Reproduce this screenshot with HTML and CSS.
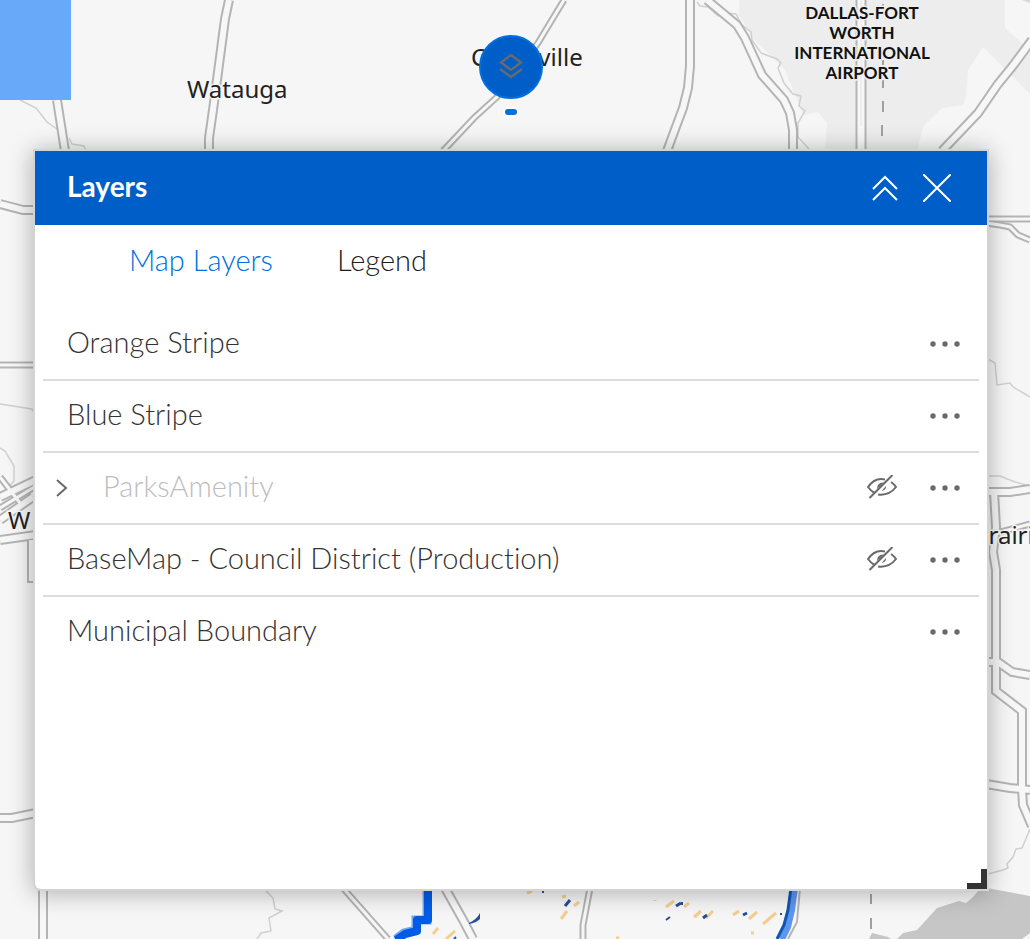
FILE: index.html
```html
<!DOCTYPE html>
<html lang="en">
<head>
    <meta charset="UTF-8">
    <meta name="viewport" content="width=device-width, initial-scale=1.0">
    <title>Layers</title>
    <link rel="stylesheet" href="styles.css">
</head>
<body>

<!-- Basemap -->
<svg class="map" viewBox="0 0 1030 939" preserveAspectRatio="xMidYMid slice" aria-hidden="true">
    <defs>
        <g id="roads">
            <path d="M57 100L65 151"/>
            <path d="M229 0L225 19L213 110L209 138V151"/>
            <path d="M690 0L690 66L688 88L683 108L677 124L667 151"/>
            <path d="M707 0L737 25L745 38L762 75L784 100L790 113L793 130V151"/>
            <path d="M1032 40L1012 67L998 84L978 113L942 151"/>
            <path d="M0 204L23 210H36"/>
            <path d="M0 520L33 497M0 540L36 535M0 497L36 480"/>
            <path d="M32 540V578H36"/>
            <path d="M0 818H12L36 813"/>
            <path d="M986 492H1010L1030 489"/>
            <path d="M994 492L996 527L993 552L996 570V691L1022 711V789L1023 805L1032 826"/>
            <path d="M986 662H998L1012 672L1030 675"/>
            <path d="M986 784L1010 788L1030 790"/>
            <path d="M43 888V939"/>
            <path d="M445 888L463 920L473 939"/>
        </g>
        <g id="small-roads">
            <path d="M564 0L547 28L538 43L497 97L474 118L443 151"/>
            <path d="M0 365H36"/>
            <path d="M0 477L20 503M0 508L36 486"/>
            <path d="M986 219H1030"/>
            <path d="M986 223L1000 225L1010 227L1018 235L1030 240"/>
            <path d="M997 533L1030 524"/>
            <path d="M343 888L388 939"/>
            <path d="M590 888L583 925V939"/>
        </g>
    </defs>

    <rect width="1030" height="939" fill="#f6f6f6"/>
    <path fill="#ededed" d="M739 0H1005V28L1030 50V94L983 47L968 70L966 97L963 105L942 108L923 127L917 151H825L827 123L818 112L803 115L785 70L752 37L739 15z"/>
    <path fill="#d8d8d8" d="M1022 0H1030V3z"/>
    <path fill="#c6c6c6" d="M978 891L987 888L1030 896V933L1022 939H897L903 933L917 930L937 908L959 901L966 903L973 897zM872 933L888 937L891 939H869z"/>

    <g class="thin">
        <path d="M20 100L36 108L47 122L57 129M69 138L72 144L84 146L86 150"/>
        <path d="M697 2L700 6L708 7L718 16L727 13L736 14L742 25L751 32L752 40L761 53L777 59L781 63L778 68L784 83L793 94L801 96L799 106L805 111L798 123V137L809 149"/>
        <path d="M0 404L32 409L34 412M0 448L5 451L14 466V481L9 487"/>
        <path d="M986 358L995 363L997 385L1010 383L1013 387L1025 394L1030 397M986 476H1000L1015 482L1030 486"/>
        <path d="M1030 829L1022 848L1016 849L1013 857L1007 864L1008 868L1003 870L988 874"/>
        <path d="M266 891L273 898L275 909L282 911L269 918L271 931L261 933L257 939"/>
    </g>

    <use href="#roads" class="casing"/>
    <use href="#small-roads" class="casing casing-small"/>
    <use href="#roads" class="core"/>
    <use href="#small-roads" class="core core-small"/>

    <path class="casing casing-wide" d="M861 0V151"/>
    <path class="core core-wide" d="M861 0V151"/>
    <path class="divider" d="M861 0V126"/>
    <path class="rail" d="M883 4V14M883 28V39M883 60V65M883 80V88M883 101V112M882 125V136M871 894V904M871 918V929"/>

    <!-- District outlines -->
    <path fill="none" stroke="#7aa9ee" stroke-width="9" d="M427 891V920H416V930L404 933L396 939"/>
    <path fill="none" stroke="#005ce6" stroke-width="8" stroke-linejoin="round" d="M428 888V920H417V931L405 934L396 940"/>
    <path fill="none" stroke="#b4b4b4" stroke-width="2" d="M800 888L797 922L788 939"/>
    <path fill="none" stroke="#5c96ee" stroke-width="8" d="M794 888L791 910L787 927L781 939"/>
    <path fill="none" stroke="#1256b0" stroke-width="3" d="M791 888L788 910L784 925L777 939"/>

    <!-- Stripe layers -->
    <g stroke="#f2cf90" stroke-width="3">
        <path d="M527 893L532 891M562 897L566 896M561 919L567 911M574 906L579 902M655 900V901M666 907L674 901M684 907L689 903M695 917L700 912M433 934L438 928M446 939L455 931M616 938H619M694 917L701 911M706 918L713 911M733 915L739 911M749 919L757 912M763 924L770 918L776 913M751 933H754"/>
    </g>
    <g stroke="#2a4d99" stroke-width="3">
        <path d="M565 906L570 900M676 906L681 903M703 918L707 915M743 915L747 913"/>
        <path stroke-width="2" d="M542 892H544M666 920L670 917M682 902V905M780 914H782M454 939L456 937"/>
    </g>
    <path fill="#2a4d99" d="M469 923Q477 919 480 913V919Q476 923 469 924z"/>

    <g class="labels">
        <text x="187" y="98">Watauga</text>
        <text x="471" y="66">Colleyville</text>
        <text x="8" y="529">W</text>
        <text x="974" y="544">Prairie</text>
    </g>
    <g class="labels labels-airport">
        <text x="862" y="19">DALLAS-FORT</text>
        <text x="862" y="39">WORTH</text>
        <text x="862" y="59">INTERNATIONAL</text>
        <text x="862" y="79">AIRPORT</text>
    </g>

    <rect width="71" height="100" fill="#68a9fa"/>
</svg>

<div class="app">
    <button type="button" class="launcher" aria-label="Layers" aria-pressed="true">
        <svg width="24" height="26" viewBox="0 0 24 26">
            <path d="M12 1L22 8.500L12 16L2 8.500zM1 15L12 23L23 15"/>
        </svg>
    </button>
    <span class="indicator"></span>

    <section class="panel">
        <header class="panel-header">
            <h1>Layers</h1>
            <button type="button" class="header-button" aria-label="Collapse">
                <svg width="28" height="28" viewBox="0 0 28 28">
                    <path d="M2 15L14 3L26 15M2 26L14 14L26 26"/>
                </svg>
            </button>
            <button type="button" class="header-button" aria-label="Close">
                <svg width="28" height="28" viewBox="0 0 28 28">
                    <path d="M0 0L28 28M28 0L0 28"/>
                </svg>
            </button>
        </header>

        <nav class="tabs">
            <button type="button" class="tab active">Map Layers</button>
            <button type="button" class="tab">Legend</button>
        </nav>

        <ul class="layers">
            <li class="layer">
                <span class="name">Orange Stripe</span>
                <button type="button" class="icon-button" aria-label="Orange Stripe options">
                    <svg class="dots" width="32" height="8" viewBox="0 0 32 8"><circle cx="4" cy="4" r="2.700"/><circle cx="16" cy="4" r="2.700"/><circle cx="28" cy="4" r="2.700"/></svg>
                </button>
            </li>
            <li class="layer">
                <span class="name">Blue Stripe</span>
                <button type="button" class="icon-button" aria-label="Blue Stripe options">
                    <svg class="dots" width="32" height="8" viewBox="0 0 32 8"><circle cx="4" cy="4" r="2.700"/><circle cx="16" cy="4" r="2.700"/><circle cx="28" cy="4" r="2.700"/></svg>
                </button>
            </li>
            <li class="layer group">
                <button type="button" class="icon-button expand" aria-label="Expand ParksAmenity">
                    <svg class="line" width="15" height="18" viewBox="0 0 15 18"><path d="M1 1L10 9L1 17"/></svg>
                </button>
                <span class="name muted">ParksAmenity</span>
                <button type="button" class="icon-button" aria-label="Show ParksAmenity">
                    <svg class="line" width="30" height="26" viewBox="0 0 30 26">
                        <path d="M18 4.500Q8 2 1 12Q4 16 7 17.500M24 7Q27 9 29 12Q22 21 11 19.500M2.500 23L25.500 0"/>
                        <path class="solid" d="M10 14Q10 7 17 7.500zM19 11Q19.500 15 14.500 16z"/>
                    </svg>
                </button>
                <button type="button" class="icon-button" aria-label="ParksAmenity options">
                    <svg class="dots" width="32" height="8" viewBox="0 0 32 8"><circle cx="4" cy="4" r="2.700"/><circle cx="16" cy="4" r="2.700"/><circle cx="28" cy="4" r="2.700"/></svg>
                </button>
            </li>
            <li class="layer">
                <span class="name">BaseMap - Council District (Production)</span>
                <button type="button" class="icon-button" aria-label="Show Council District">
                    <svg class="line" width="30" height="26" viewBox="0 0 30 26">
                        <path d="M18 4.500Q8 2 1 12Q4 16 7 17.500M24 7Q27 9 29 12Q22 21 11 19.500M2.500 23L25.500 0"/>
                        <path class="solid" d="M10 14Q10 7 17 7.500zM19 11Q19.500 15 14.500 16z"/>
                    </svg>
                </button>
                <button type="button" class="icon-button" aria-label="Council District options">
                    <svg class="dots" width="32" height="8" viewBox="0 0 32 8"><circle cx="4" cy="4" r="2.700"/><circle cx="16" cy="4" r="2.700"/><circle cx="28" cy="4" r="2.700"/></svg>
                </button>
            </li>
            <li class="layer">
                <span class="name">Municipal Boundary</span>
                <button type="button" class="icon-button" aria-label="Municipal Boundary options">
                    <svg class="dots" width="32" height="8" viewBox="0 0 32 8"><circle cx="4" cy="4" r="2.700"/><circle cx="16" cy="4" r="2.700"/><circle cx="28" cy="4" r="2.700"/></svg>
                </button>
            </li>
        </ul>
        <span class="resize-handle"></span>
    </section>
</div>

</body>
</html>
```
FILE: styles.css
```css
* {
    box-sizing: border-box;
}
body {
    margin: 0;
    font-family: Lato, "Open Sans", sans-serif;
    font-variant-ligatures: none;
    background-color: #f6f6f6;
}
button {
    padding: 0;
    border: none;
    background: none;
    font: inherit;
    color: inherit;
    cursor: pointer;
}
svg {
    display: block;
}

/* Map */
.map {
    position: absolute;
    inset: 0;
    width: 100%;
    height: 100%;
}
.thin {
    fill: none;
    stroke: #d0d0d0;
    stroke-width: 1.5;
}
.casing {
    fill: none;
    stroke: #b4b4b4;
    stroke-width: 10;
}
.core {
    fill: none;
    stroke: #f7f7f7;
    stroke-width: 6;
}
.casing-small {
    stroke-width: 7;
}
.core-small {
    stroke-width: 3;
}
.casing-wide {
    stroke-width: 11;
}
.core-wide {
    stroke-width: 7;
}
.divider {
    stroke: #e4e4e4;
}
.rail {
    stroke: #a0a0a0;
    stroke-width: 2;
}
.labels {
    font-family: "Noto Sans", sans-serif;
    font-size: 24px;
    fill: #222;
    stroke: #f6f6f6;
    stroke-width: 3;
    paint-order: stroke;
}
.labels-airport {
    font-family: Lato, sans-serif;
    font-size: 17px;
    font-weight: 700;
    text-anchor: middle;
    fill: #111;
    stroke: #ededed;
}

/* Widget */
.app {
    position: relative;
    display: flex;
    flex-direction: column;
    align-items: center;
    min-height: 100vh;
    padding: 35px 43px 50px 35px;
}
.launcher {
    display: flex;
    align-items: center;
    justify-content: center;
    width: 64px;
    height: 64px;
    border: 2px solid #0070e0;
    border-radius: 50%;
    background-color: #005ec8;
}
.launcher svg {
    fill: none;
    stroke: #6a6a6a;
    stroke-width: 2.5;
}
.indicator {
    width: 12px;
    height: 6px;
    margin: 10px 0 36px;
    border-radius: 3px;
    background-color: #0070e0;
    box-shadow: 0 0 0 2px #fff;
}
.panel {
    position: relative;
    flex: 1;
    align-self: stretch;
    background-color: #fff;
    border-radius: 0 0 0 6px;
    box-shadow: 0 0 0 2px #d3d3d3, 0 2px 24px 2px rgba(0, 0, 0, 0.3);
}
.panel-header {
    display: flex;
    align-items: center;
    gap: 24px;
    height: 74px;
    padding: 0 36px 0 32px;
    background-color: #005ec8;
    color: #fff;
}
.panel-header h1 {
    flex: 1;
    margin: 0;
    padding-bottom: 4px;
    font-size: 28px;
    font-weight: 700;
}
.header-button svg {
    fill: none;
    stroke: #fff;
    stroke-width: 2;
}
.tabs {
    display: flex;
    align-items: center;
    gap: 64px;
    height: 84px;
    padding: 0 94px 16px;
    font-size: 29px;
    font-weight: 300;
    color: #1c1c1c;
}
.tab.active {
    color: #0070e0;
}
.layers {
    margin: 0 8px;
    padding: 0;
    list-style: none;
}
.layer {
    display: flex;
    align-items: center;
    gap: 32px;
    height: 72px;
    padding: 0 18px 0 24px;
    border-bottom: 2px solid #dcdcdc;
    font-size: 29px;
    font-weight: 300;
    color: #333;
}
.layer:last-child {
    border-bottom-color: transparent;
}
.layer.group {
    padding-left: 13px;
}
.name {
    flex: 1;
    padding-bottom: 6px;
}
.muted {
    color: #bdbdbd;
}
.dots {
    fill: #6a6a6a;
}
.line {
    fill: none;
    stroke: #6a6a6a;
    stroke-width: 2;
}
.solid {
    fill: #6a6a6a;
    stroke: none;
}
.resize-handle {
    position: absolute;
    right: 0;
    bottom: 0;
    width: 20px;
    height: 20px;
    border: solid #333;
    border-width: 0 6px 6px 0;
    cursor: nwse-resize;
}
```
